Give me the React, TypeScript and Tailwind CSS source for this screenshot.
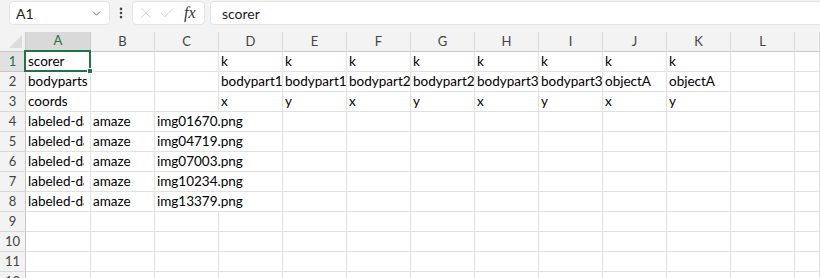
import React from 'react';
import { ChevronDown, EllipsisVertical, X, Check } from 'lucide-react';

const COLS = ['A', 'B', 'C', 'D', 'E', 'F', 'G', 'H', 'I', 'J', 'K', 'L', ''];

const rows: string[][] = [
  ['scorer', '', '', 'k', 'k', 'k', 'k', 'k', 'k', 'k', 'k'],
  ['bodyparts', '', '', 'bodypart1', 'bodypart1', 'bodypart2', 'bodypart2', 'bodypart3', 'bodypart3', 'objectA', 'objectA'],
  ['coords', '', '', 'x', 'y', 'x', 'y', 'x', 'y', 'x', 'y'],
  ['labeled-data', 'amaze', 'img01670.png'],
  ['labeled-data', 'amaze', 'img04719.png'],
  ['labeled-data', 'amaze', 'img07003.png'],
  ['labeled-data', 'amaze', 'img10234.png'],
  ['labeled-data', 'amaze', 'img13379.png'],
  [],
  [],
  [],
  [],
];

const App: React.FC = () => {
  return (
    <div className="w-[820px] h-[278px] overflow-hidden bg-white text-black font-['Lato','Liberation_Sans',sans-serif]">
      {/* formula bar */}
      <div className="h-[32px] bg-[#f3f3f3] flex items-start pt-px pl-[9px]">
        <div className="w-[101px] h-[24px] bg-white border border-[#e3e3e3] rounded-[4px] flex items-center justify-between pl-[6px] pr-[6px]">
          <span className="text-[14px] text-[#222]">A1</span>
          <ChevronDown size={13} strokeWidth={1.5} className="text-[#555]" />
        </div>
        <div className="w-[22px] h-[24px] flex items-center justify-center">
          <EllipsisVertical size={14} strokeWidth={2.5} className="text-[#444]" />
        </div>
        <div className="w-[73px] h-[24px] bg-white border border-[#e3e3e3] rounded-[4px] flex items-center pl-[4px] gap-[3px]">
          <X size={18} strokeWidth={1} className="text-[#c4c4c4]" />
          <Check size={18} strokeWidth={1} className="text-[#c4c4c4]" />
          <span className="ml-[5px] text-[16px] italic text-[#333] font-['Liberation_Serif',serif]">fx</span>
        </div>
        <div className="ml-[5px] flex-1 h-[24px] bg-white border border-[#e3e3e3] border-r-0 rounded-l-[4px] flex items-center pl-[11px]">
          <span className="text-[14px] text-[#222]">scorer</span>
        </div>
      </div>

      {/* sheet grid */}
      <div className="grid grid-cols-[26px_65px_repeat(11,64px)_1fr] auto-rows-[20px] text-[13.5px]">
        <div className="relative bg-[#f3f3f3] border-r border-b border-[#c8c8c8]">
          <div className="absolute right-[3px] bottom-[3px] w-0 h-0 border-l-[13px] border-l-transparent border-b-[13px] border-b-[#dcdcdc]" />
        </div>
        {COLS.map((c, i) => (
          <div
            key={c + i}
            className={
              i === 0
                ? 'bg-[#d9d9d9] border-r border-b-2 border-r-[#c8c8c8] border-b-[#217346] text-[#217346] flex items-center justify-center text-[13px]'
                : 'bg-[#f3f3f3] border-r border-b border-r-[#dadada] border-b-[#c8c8c8] text-[#444] flex items-center justify-center text-[13px]'
            }
          >
            {c}
          </div>
        ))}

        {rows.map((r, ri) => {
          const overflowC = ri >= 3 && ri <= 7;
          return (
            <React.Fragment key={ri}>
              <div
                className={
                  ri === 0
                    ? 'bg-[#e1e1e1] border-r border-b border-[#c8c8c8] text-[#217346] flex items-center justify-center text-[13px]'
                    : 'bg-[#f3f3f3] border-r border-b border-r-[#c8c8c8] border-b-[#dadada] text-[#444] flex items-center justify-center text-[13px]'
                }
              >
                {ri + 1}
              </div>
              {COLS.map((_, ci) => {
                if (overflowC && ci === 3) return null;
                const val = r[ci] ?? '';
                const sel = ri === 0 && ci === 0;
                // cells with a neighbour to the right get clipped at the grid line
                const clipped = overflowC && ci === 0;
                return (
                  <div
                    key={ci}
                    className={
                      (overflowC && ci === 2 ? 'col-span-2 ' : '') +
                      (sel ? 'relative ' : 'overflow-hidden ') +
                      'border-r border-b border-[#e1e1e1] flex items-center pl-[2px] whitespace-nowrap'
                    }
                  >
                    {clipped ? <span className="block w-[56px] overflow-hidden">{val}</span> : val}
                    {sel && (
                      <div className="absolute -left-[2px] -top-[2px] -right-px -bottom-px border-2 border-[#217346] pointer-events-none">
                        <div className="absolute -right-[4px] -bottom-[4px] w-[6px] h-[6px] bg-[#217346] border border-white" />
                      </div>
                    )}
                  </div>
                );
              })}
            </React.Fragment>
          );
        })}
      </div>
    </div>
  );
};

export default App;
